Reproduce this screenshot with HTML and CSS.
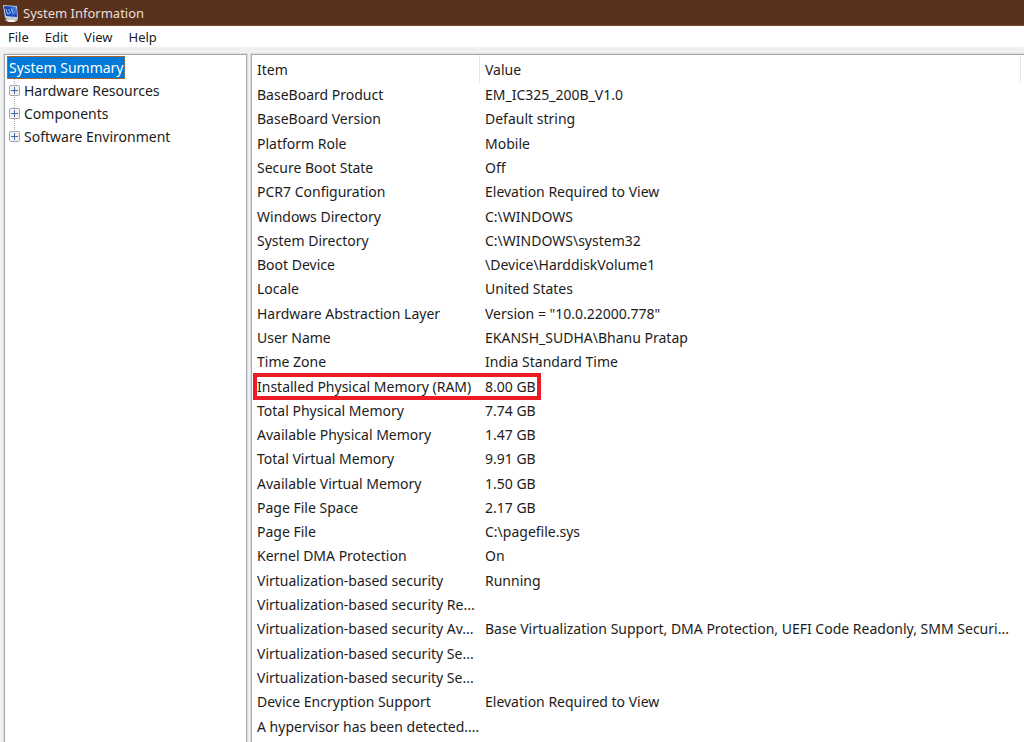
FILE: index.html
```html
<!DOCTYPE html>
<html lang="en">
<head>
<meta charset="utf-8">
<title>System Information</title>
<link rel="stylesheet" href="styles.css">
</head>
<body>
<header class="titlebar">
  <svg class="app-icon" viewBox="0 0 18 20" aria-hidden="true">
    <path d="M6 14h7l3 3-3 2H6l-3-2z" fill="#c9c6c6"/>
    <path d="M6 17h7l-1 2H7z" fill="#f8f5f3"/>
    <path d="M1 2l14 1 1 13-13-1z" fill="#b9cbe6"/>
    <path d="M2 3l12 1 1 10-11-1z" fill="#1540ae"/>
    <path d="M9 3.600l5 .4.800 6-4.800 3z" fill="#3c76d8"/>
    <path d="M4 6l1.500 5 3-1-2-4M9 5.500l2 4" fill="none" stroke="#a9c8f5" stroke-width="1"/>
  </svg>
  <h1 class="title">System Information</h1>
</header>
<nav class="menubar">
  <button class="menu">File</button>
  <button class="menu">Edit</button>
  <button class="menu">View</button>
  <button class="menu">Help</button>
</nav>
<main class="panes">
  <aside class="tree-pane">
    <button class="root">System Summary</button>
    <ul class="tree">
      <li><button class="node"><svg class="plus" viewBox="0 0 11 11" aria-hidden="true"><rect x=".5" y=".5" width="10" height="10" rx="1" fill="#f2f2f2" stroke="#a3a3a3"/><path d="M2 5.500h7M5.500 2v7" stroke="#4568a5"/></svg>Hardware Resources</button></li>
      <li><button class="node"><svg class="plus" viewBox="0 0 11 11" aria-hidden="true"><rect x=".5" y=".5" width="10" height="10" rx="1" fill="#f2f2f2" stroke="#a3a3a3"/><path d="M2 5.500h7M5.500 2v7" stroke="#4568a5"/></svg>Components</button></li>
      <li><button class="node"><svg class="plus" viewBox="0 0 11 11" aria-hidden="true"><rect x=".5" y=".5" width="10" height="10" rx="1" fill="#f2f2f2" stroke="#a3a3a3"/><path d="M2 5.500h7M5.500 2v7" stroke="#4568a5"/></svg>Software Environment</button></li>
    </ul>
  </aside>
  <section class="list-pane">
    <table class="details">
      <thead><tr><th class="item">Item</th><th>Value</th></tr></thead>
      <tbody>
        <tr><td>BaseBoard Product</td><td>EM_IC325_200B_V1.0</td></tr>
        <tr><td>BaseBoard Version</td><td>Default string</td></tr>
        <tr><td>Platform Role</td><td>Mobile</td></tr>
        <tr><td>Secure Boot State</td><td>Off</td></tr>
        <tr><td>PCR7 Configuration</td><td>Elevation Required to View</td></tr>
        <tr><td>Windows Directory</td><td>C:\WINDOWS</td></tr>
        <tr><td>System Directory</td><td>C:\WINDOWS\system32</td></tr>
        <tr><td>Boot Device</td><td>\Device\HarddiskVolume1</td></tr>
        <tr><td>Locale</td><td>United States</td></tr>
        <tr><td>Hardware Abstraction Layer</td><td>Version = "10.0.22000.778"</td></tr>
        <tr><td>User Name</td><td>EKANSH_SUDHA\Bhanu Pratap</td></tr>
        <tr><td>Time Zone</td><td>India Standard Time</td></tr>
        <tr><td class="marked">Installed Physical Memory (RAM)</td><td>8.00 GB</td></tr>
        <tr><td>Total Physical Memory</td><td>7.74 GB</td></tr>
        <tr><td>Available Physical Memory</td><td>1.47 GB</td></tr>
        <tr><td>Total Virtual Memory</td><td>9.91 GB</td></tr>
        <tr><td>Available Virtual Memory</td><td>1.50 GB</td></tr>
        <tr><td>Page File Space</td><td>2.17 GB</td></tr>
        <tr><td>Page File</td><td>C:\pagefile.sys</td></tr>
        <tr><td>Kernel DMA Protection</td><td>On</td></tr>
        <tr><td>Virtualization-based security</td><td>Running</td></tr>
        <tr><td>Virtualization-based security Re...</td><td></td></tr>
        <tr><td>Virtualization-based security Av...</td><td>Base Virtualization Support, DMA Protection, UEFI Code Readonly, SMM Securi...</td></tr>
        <tr><td>Virtualization-based security Se...</td><td></td></tr>
        <tr><td>Virtualization-based security Se...</td><td></td></tr>
        <tr><td>Device Encryption Support</td><td>Elevation Required to View</td></tr>
        <tr><td>A hypervisor has been detected....</td><td></td></tr>
      </tbody>
    </table>
  </section>
</main>
</body>
</html>
```
FILE: styles.css
```css
*, *::after { box-sizing: border-box; }

body {
  margin: 0;
  min-height: 100vh;
  display: flex;
  flex-direction: column;
  background: #f0f0f0;
  color: #1c1c1c;
  font-family: "Noto Sans", "Open Sans", sans-serif;
  font-size: 14px;
  line-height: 22px;
}

button {
  margin: 0;
  padding: 0;
  border: 0;
  background: none;
  color: inherit;
  font: inherit;
  white-space: nowrap;
}

.titlebar {
  display: flex;
  align-items: center;
  gap: 3px;
  height: 26px;
  padding-left: 2px;
  background: #5a321c;
  border-bottom: 1px solid #75492f;
  color: #e9dfd9;
}

.app-icon { width: 18px; height: 20px; }

.title {
  margin: 0;
  font-size: 13px;
  font-weight: 400;
}

.menubar {
  display: flex;
  gap: 16px;
  height: 21px;
  padding-left: 8px;
  background: #fff;
  font-size: 13px;
}

.panes {
  flex: 1;
  display: grid;
  grid-template-columns: 243px 1fr;
  gap: 4px;
  padding: 7px 0 0 4px;
}

.tree-pane, .list-pane {
  background: #fff;
  border: 1px solid #a5a9b0;
  border-bottom: 0;
  box-shadow: 0 0 0 1px #dcdde0;
}

.tree-pane { padding: 1px 2px; }

.root {
  height: 23px;
  padding: 0 1px 0 2px;
  background: #0078d7;
  outline: 1px dotted #b9743a;
  outline-offset: -1px;
  color: #fff;
}

.tree {
  margin: 0 0 0 7px;
  padding: 0;
  list-style: none;
  background: repeating-linear-gradient(#aaa 0 1px, #fff 1px 2px) 0 0 / 1px 52px no-repeat;
}

.tree li { height: 23px; }

.node {
  display: flex;
  align-items: center;
  gap: 4px;
  height: 23px;
  margin-left: -5px;
}

.plus { width: 11px; height: 11px; }

.list-pane {
  display: flex;
  border-right: 0;
  padding: 0 3px 3px 0;
}

.details {
  flex: 1;
  border-collapse: separate;
  border-spacing: 0;
  table-layout: fixed;
  width: 100%;
}

.details th, .details td {
  height: 24px;
  padding: 0 0 0 5px;
  text-align: left;
  font-weight: 400;
  white-space: nowrap;
}

.details th {
  height: 28px;
  padding-top: 2px;
  border-right: 1px solid #e5e5e5;
}

.details .item { width: 228px; }

.details .marked { position: relative; }

.marked::after {
  content: "";
  position: absolute;
  top: -1px;
  bottom: -1px;
  left: 1px;
  width: 288px;
  border: 4px solid #ed1c24;
}
```
